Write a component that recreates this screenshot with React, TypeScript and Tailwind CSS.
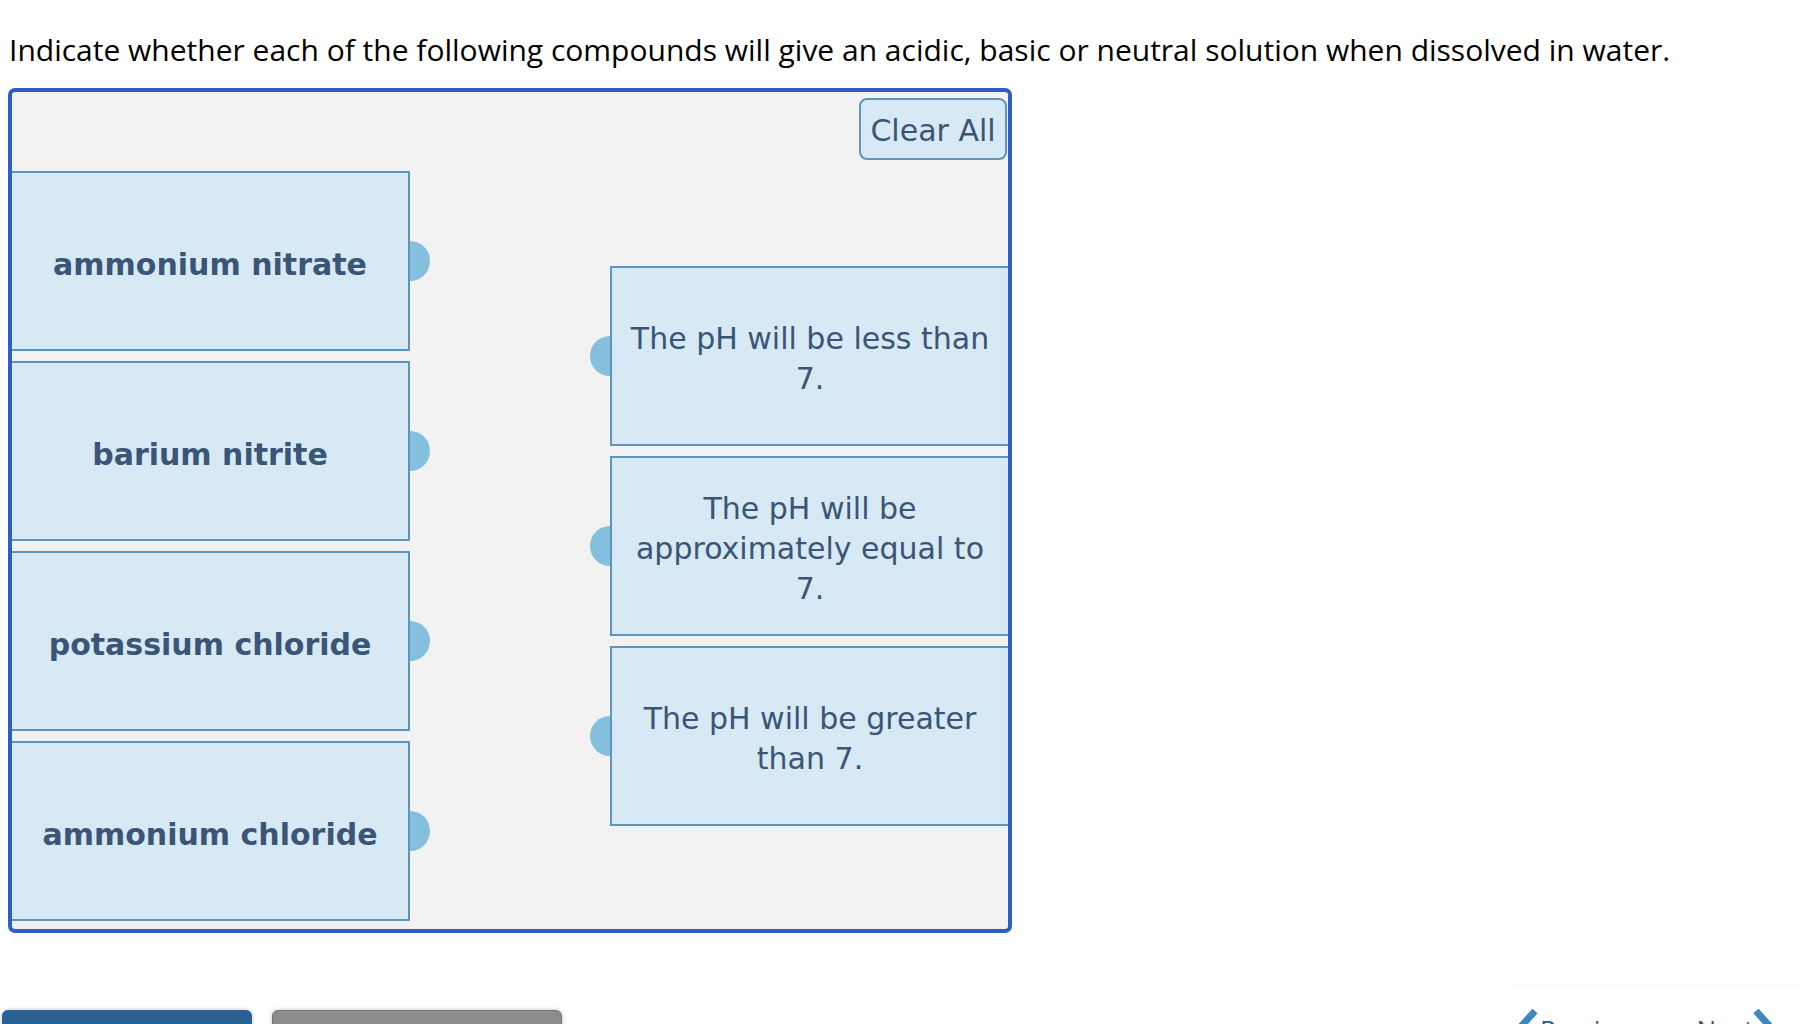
const compounds = ['ammonium nitrate', 'barium nitrite', 'potassium chloride', 'ammonium chloride'];

const answers = [
  'The pH will be less than 7.',
  'The pH will be approximately equal to 7.',
  'The pH will be greater than 7.'
];

const verdana = "font-['Verdana','DejaVu_Sans',sans-serif]";

const Chevron = ({ dir }: { dir: 'left' | 'right' }) => (
  <svg width="26" height="44" viewBox="0 0 26 44" className="shrink-0">
    <polyline
      points={dir === 'left' ? '23,2 5,22 23,42' : '3,2 21,22 3,42'}
      fill="none"
      stroke="#3c88c3"
      strokeWidth="7"
    />
  </svg>
);

export default function App() {
  return (
    <div className="w-[1810px] h-[1024px] overflow-hidden bg-white">
      <p className="pt-[29px] pl-[9px] text-[30px] leading-[41px] text-black font-['Open_Sans',sans-serif]">
        Indicate whether each of the following compounds will give an acidic, basic or neutral solution when dissolved in water.
      </p>

      <div className="mt-[18px] ml-[8px] w-[1004px] h-[845px] border-4 border-[#2c5fc6] rounded-[7px] bg-[#f2f2f2]">
        <div className="flex justify-end pt-[6px] pr-[1px]">
          <button
            className={`w-[148px] h-[62px] pt-[2px] rounded-[8px] border-2 border-[#5d95bf] bg-[#d6e9f4] text-[30px] text-[#3b5577] ${verdana}`}
          >
            Clear All
          </button>
        </div>

        <div className="flex">
          <div className="mt-[11px] w-[398px] flex flex-col gap-[10px]">
            {compounds.map((c) => (
              <div
                key={c}
                className="relative h-[180px] pt-[6px] border-y-2 border-r-2 border-[#5d95bf] bg-[#d6e9f4] flex items-center justify-center"
              >
                <span className={`text-[30px] font-bold text-[#3b5577] ${verdana}`}>{c}</span>
                <span className="absolute -right-[22px] top-1/2 -translate-y-1/2 w-[20px] h-[40px] rounded-r-full bg-[#84bfdd]" />
              </div>
            ))}
          </div>

          <div className="ml-[200px] mt-[106px] w-[398px] flex flex-col gap-[10px]">
            {answers.map((a) => (
              <div
                key={a}
                className="relative h-[180px] pt-[6px] border-y-2 border-l-2 border-[#5d95bf] bg-[#d6e9f4] flex items-center justify-center px-[14px]"
              >
                <span className={`text-center text-[30px] leading-[40px] text-[#3b5577] ${verdana}`}>{a}</span>
                <span className="absolute -left-[22px] top-1/2 -translate-y-1/2 w-[20px] h-[40px] rounded-l-full bg-[#84bfdd]" />
              </div>
            ))}
          </div>
        </div>
      </div>

      <div className="mt-[51px] flex justify-between">
        <div className="pt-[26px] pl-[2px] flex gap-[20px]">
          <div className="w-[250px] h-[50px] rounded-[6px] bg-[#2a6194] shadow-[0_0_4px_rgba(0,0,0,0.25)]" />
          <div className="w-[290px] h-[50px] rounded-[6px] bg-[#8c8c8c] border border-[#777] shadow-[0_0_4px_rgba(0,0,0,0.25)]" />
        </div>
        <div className="mr-[7px] w-[293px] border-t border-[#f9f9f9] pt-[24px] pl-[2px] flex items-start">
          <Chevron dir="left" />
          <span className="ml-[2px] mt-[5px] text-[26px] leading-[30px] text-[#2d5b8f] font-['Open_Sans',sans-serif]">Previous</span>
          <span className="ml-[52px] mt-[5px] text-[26px] leading-[30px] text-[#2d5b8f] font-['Open_Sans',sans-serif]">Next</span>
          <Chevron dir="right" />
        </div>
      </div>
    </div>
  );
}
